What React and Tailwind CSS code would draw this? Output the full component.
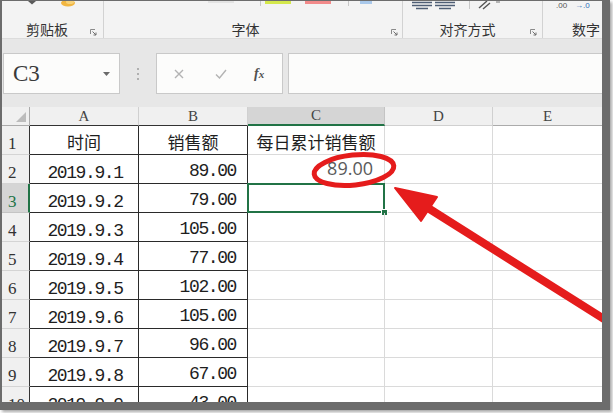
import React from "react";

const rows = [
  { n: 2, a: "2019.9.1", b: "89.00", c: "89.00" },
  { n: 3, a: "2019.9.2", b: "79.00", selected: true },
  { n: 4, a: "2019.9.3", b: "105.00" },
  { n: 5, a: "2019.9.4", b: "77.00" },
  { n: 6, a: "2019.9.5", b: "102.00" },
  { n: 7, a: "2019.9.6", b: "105.00" },
  { n: 8, a: "2019.9.7", b: "96.00" },
  { n: 9, a: "2019.9.8", b: "67.00" },
  { n: 10, a: "2019.9.9", b: "43.00" },
];

const Launcher = () => (
  <svg width="7" height="7" viewBox="0 0 7 7" className="shrink-0">
    <path d="M0.5 5V0.5H5" stroke="#8a8a8a" fill="none" />
    <path d="M2.5 2.5L6 6M6 3.5V6H3.5" stroke="#6f6f6f" fill="none" />
  </svg>
);

const Group = ({ className, label, labelClass, launcherClass, children }) => (
  <div className={`${className} shrink-0 h-full flex flex-col`}>
    <div className="h-[18px]">{children}</div>
    <div className="flex-1 flex items-center">
      <span
        className={`${labelClass} text-[14px] leading-none text-[#333] [font-family:'Noto_Sans_CJK_SC',sans-serif]`}
      >
        {label}
      </span>
      {launcherClass && (
        <div className={launcherClass}>
          <Launcher />
        </div>
      )}
    </div>
  </div>
);

const Ribbon = () => (
  <div className="h-[38px] shrink-0 bg-[#f3f3f3] flex border-b border-[#dcdcdc]">
    <Group
      className="w-[102px] border-r border-[#d2d2d2]"
      label="剪贴板"
      labelClass="flex-1 text-center pl-[2px]"
      launcherClass="mr-[6px] mt-[8px]"
    >
      <svg width="102" height="10">
        <path d="M26 0H34L30 3.5Z" fill="#5a5a5a" />
        <ellipse cx="66" cy="2" rx="7" ry="3.5" fill="#f2b640" />
        <ellipse cx="68" cy="1" rx="4" ry="2" fill="#f7d27a" />
      </svg>
    </Group>
    <Group
      className="w-[299px] border-r border-[#d2d2d2]"
      label="字体"
      labelClass="flex-1 text-center"
      launcherClass="mr-[4px] ml-[4px] mt-[8px]"
    >
      <svg width="299" height="10">
        <rect x="104" y="0" width="26" height="2" fill="#e3e3e3" />
        <rect x="156" y="0" width="1" height="5" fill="#c8c8c8" />
        <rect x="161" y="0" width="26" height="3" fill="#d4e84c" />
        <rect x="201" y="0" width="26" height="3" fill="#f28a8a" />
        <rect x="244" y="0" width="1" height="5" fill="#c8c8c8" />
        <rect x="256" y="0" width="12" height="3" fill="#a9c8ea" />
      </svg>
    </Group>
    <Group
      className="w-[140px] border-r border-[#d2d2d2]"
      label="对齐方式"
      labelClass="flex-1 text-center pl-[2px]"
      launcherClass="mr-[5px] mt-[8px]"
    >
      <svg width="140" height="10">
        <path d="M9 1.5H29M9 4.5H29M13 7.5H25" stroke="#4f5f76" strokeWidth="1.3" />
        <path d="M32 1.5H52M32 4.5H52M36 7.5H48" stroke="#4f5f76" strokeWidth="1.3" />
        <rect x="66" y="0" width="1" height="8" fill="#c8c8c8" />
        <path d="M76 7L84 0M80 8L87 2" stroke="#555" strokeWidth="1.4" />
        <path d="M93 1H97" stroke="#777" strokeWidth="1" />
      </svg>
    </Group>
    <Group className="flex-1" label="数字" labelClass="pl-[29px]">
      <svg width="60" height="10">
        <text x="13" y="7" fontSize="8" fill="#555" fontFamily="Liberation Sans, sans-serif">
          .00
        </text>
        <text x="32" y="7" fontSize="8" fill="#2f6fb8" fontFamily="Liberation Sans, sans-serif">
          →.0
        </text>
      </svg>
    </Group>
  </div>
);

const FormulaBar = () => (
  <>
    <div className="h-[14px] shrink-0 bg-[#e7e7e7]" />
    <div className="h-[41px] shrink-0 bg-[#e7e7e7] flex">
      <div className="ml-[1px] w-[117px] bg-[#fcfcfb] border border-[#c9c9c9] flex items-center pl-[9px] pr-[9px]">
        <span className="flex-1 text-[23px] leading-none text-[#3a3a3a] [font-family:'Liberation_Serif',serif]">
          C3
        </span>
        <svg width="7" height="4">
          <path d="M0 0H7L3.5 4Z" fill="#6a6a6a" />
        </svg>
      </div>
      <div className="w-[36px] flex flex-col items-center justify-center gap-[3px]">
        <span className="w-[2px] h-[2px] bg-[#b0b0b0]" />
        <span className="w-[2px] h-[2px] bg-[#b0b0b0]" />
        <span className="w-[2px] h-[2px] bg-[#b0b0b0]" />
      </div>
      <div className="w-[127px] bg-[#fcfcfb] border border-[#c9c9c9] flex items-center">
        <svg width="10" height="10" className="ml-[17px]">
          <path d="M1 1L9 9M9 1L1 9" stroke="#b3b3b3" strokeWidth="1.4" />
        </svg>
        <svg width="12" height="10" className="ml-[31px]">
          <path d="M1 5.5L4.5 9L11 1" stroke="#b3b3b3" strokeWidth="1.4" fill="none" />
        </svg>
        <span className="ml-[27px] text-[14px] leading-none italic font-bold text-[#505050] [font-family:'Liberation_Serif',serif]">
          f<span className="text-[11px]">x</span>
        </span>
      </div>
      <div className="ml-[5px] flex-1 bg-[#fcfcfb] border-y border-l border-[#c9c9c9]" />
    </div>
    <div className="h-[13px] shrink-0 bg-[#e7e7e7]" />
  </>
);

const gridCols = "grid grid-cols-[28px_109px_109px_137px_108px_109px]";
const serif = "[font-family:'Liberation_Serif',serif]";
const mono =
  "[font-family:'Liberation_Mono',monospace] text-[18px] tracking-[-1.4px] leading-none text-[#1e1e1e]";
const cjk = "[font-family:'Noto_Sans_CJK_SC',sans-serif] text-[17px] leading-none text-[#1e1e1e]";

const ColHeader = () => (
  <div className={`${gridCols} h-[19px] shrink-0 bg-[#f0f0f0] text-[15px] leading-none text-[#444] ${serif}`}>
    <div className="border-r border-b border-[#ababab] flex items-end justify-end p-[3px]">
      <svg width="10" height="10">
        <path d="M10 0V10H0Z" fill="#bcbcbc" />
      </svg>
    </div>
    <div className="border-r border-[#d0d0d0] border-b border-b-[#333] flex items-center justify-center">A</div>
    <div className="border-r border-[#d0d0d0] border-b border-b-[#333] flex items-center justify-center">B</div>
    <div className="bg-[#d5d5d5] border-r border-[#c4c4c4] border-b-2 border-b-[#217346] flex items-center justify-center">
      C
    </div>
    <div className="border-r border-[#d0d0d0] border-b border-[#ababab] flex items-center justify-center">D</div>
    <div className="border-b border-[#ababab] flex items-center justify-center">E</div>
  </div>
);

const RowHeader = ({ n, selected }) => (
  <div
    className={
      selected
        ? `bg-[#d5d5d5] border-r-2 border-r-[#217346] border-b border-b-[#c4c4c4] flex items-end pl-[6px] pb-[2px] text-[17px] leading-none text-[#217346] ${serif}`
        : `bg-[#f0f0f0] border-r border-r-[#333] border-b border-b-[#d4d4d4] flex items-end pl-[6px] pb-[2px] text-[17px] leading-none text-[#333] ${serif}`
    }
  >
    {n}
  </div>
);

const Sheet = () => (
  <div className="flex flex-col">
    <ColHeader />
    <div className={`${gridCols} h-[29px] shrink-0`}>
      <RowHeader n={1} />
      <div className={`border-r border-b border-[#2a2a2a] flex items-end justify-center pb-[4px] ${cjk}`}>时间</div>
      <div className={`border-r border-b border-[#2a2a2a] flex items-end justify-center pb-[4px] ${cjk}`}>销售额</div>
      <div className={`border-r border-b border-[#dadada] flex items-end justify-center pb-[4px] ${cjk}`}>每日累计销售额</div>
      <div className="border-r border-b border-[#dadada]" />
      <div className="border-b border-[#dadada]" />
    </div>
    {rows.map((r) => (
      <div key={r.n} className={`${gridCols} h-[29px] shrink-0`}>
        <RowHeader n={r.n} selected={r.selected} />
        <div className={`border-r border-b border-[#2a2a2a] flex items-end justify-center pl-[2px] pb-[1px] ${mono}`}>
          {r.a}
        </div>
        <div className={`border-r border-b border-[#2a2a2a] flex items-end justify-end pr-[11px] pb-[3px] ${mono}`}>
          {r.b}
        </div>
        <div className="relative border-r border-b border-[#dadada] flex items-end justify-end pr-[11px] pb-[6px]">
          {r.c && (
            <span className="[font-family:'Open_Sans',sans-serif] text-[18px] leading-none text-[#5a5a5a]">
              {r.c}
            </span>
          )}
          {r.selected && (
            <div className="absolute -left-[1px] -top-[1px] -right-[1px] -bottom-[1px] border-2 border-[#217346]">
              <div className="absolute -right-[5px] -bottom-[5px] w-[7px] h-[7px] bg-[#217346] border border-white" />
            </div>
          )}
        </div>
        <div className="border-r border-b border-[#dadada]" />
        <div className="border-b border-[#dadada]" />
      </div>
    ))}
  </div>
);

const Annotations = () => (
  <svg className="absolute inset-0 pointer-events-none" width="600" height="401" viewBox="0 0 600 401">
    <ellipse
      cx="352"
      cy="169"
      rx="40"
      ry="15"
      fill="none"
      stroke="#e51c1c"
      strokeWidth="5"
      transform="rotate(-6 352 169)"
    />
    <path d="M426 207L640 342" stroke="#e51c1c" strokeWidth="8" strokeLinecap="round" />
    <path d="M393 187L435 196L419 220Z" fill="#e51c1c" stroke="#e51c1c" strokeWidth="2" strokeLinejoin="round" />
  </svg>
);

export default function App() {
  return (
    <div className="w-[613px] h-[413px] bg-white">
      <div className="w-[610px] h-[410px] border-l-2 border-t border-r-[8px] border-b-[8px] border-[#6c6c6c] shadow-[2px_2px_3px_rgba(0,0,0,0.35)]">
        <div className="relative w-[600px] h-[401px] overflow-hidden bg-white flex flex-col">
          <Ribbon />
          <FormulaBar />
          <Sheet />
          <Annotations />
        </div>
      </div>
    </div>
  );
}
